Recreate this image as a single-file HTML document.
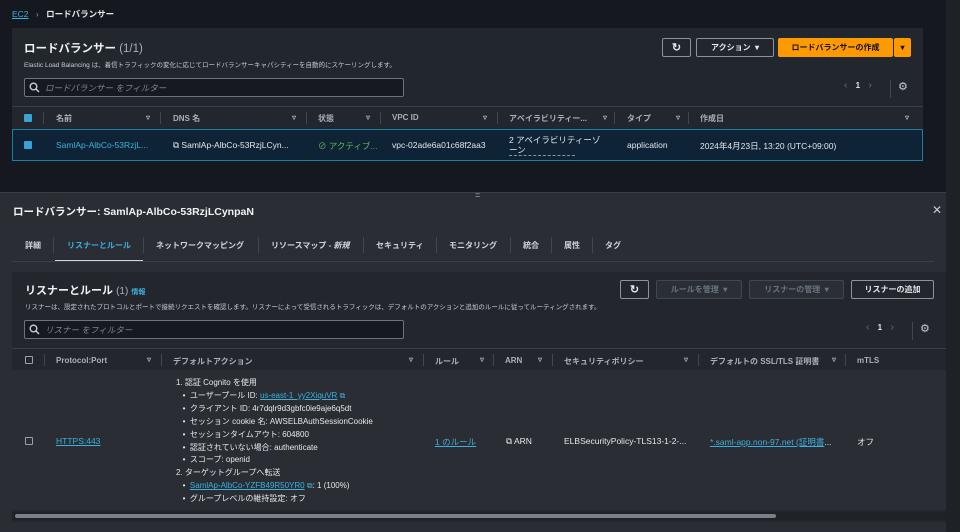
<!DOCTYPE html>
<html><head><meta charset="utf-8"><style>
*{box-sizing:border-box;margin:0;padding:0}
body{width:960px;height:532px;overflow:hidden;background:#15181e;font-family:"Liberation Sans","Noto Sans CJK JP",sans-serif;color:#d1d5db;font-size:8.5px;position:relative}
.abs{position:absolute;white-space:nowrap}
.strip{position:absolute;left:946px;top:0;width:14px;height:532px;background:#1e2126}
.card{position:absolute;left:12px;top:28px;width:911px;height:133px;background:#22262d}
.btn{position:absolute;border:1px solid #8b939c;border-radius:2px;background:#22262d;color:#e5e7eb;font-weight:bold;font-size:8px;display:flex;align-items:center;justify-content:center}
.dis{border-color:#414750;color:#6b7280;background:#2a2e35}
.search{position:absolute;border:1px solid #6b7280;border-radius:2px;background:#161a20;color:#7d848f;font-style:italic;font-size:8.5px;padding-left:20px;display:flex;align-items:center}
.th{position:absolute;font-weight:bold;color:#aab0b8;font-size:8px}
.cb{position:absolute;width:8px;height:8px;border-radius:1px}
.on{background:#3aa3d6}
.off{border:1px solid #9aa1aa}
a{color:#3cb0dc;text-decoration:underline}
.sep{position:absolute;width:1px;height:12px;background:#414750}
.panel{position:absolute;left:0;top:192px;width:946px;height:340px;background:#2a2d33;border-top:1px solid #3a3e45}
.inner{position:absolute;left:12px;top:272px;width:934px;height:250px;background:#23272d}
.row2{position:absolute;left:12px;top:370px;width:934px;height:140px;background:#2a2e34}
</style></head><body>
<div class="strip"></div>
<div class="abs" style="left:12px;top:8px;font-size:8.5px"><span style="color:#3cb0dc;text-decoration:underline">EC2</span> <span style="color:#8b939c;margin:0 5px">›</span> <b style="color:#e5e7eb">ロードバランサー</b></div>
<div class="card"></div>
<div class="abs" style="left:24px;top:40px;font-size:11.5px;font-weight:bold;color:#f0f2f4">ロードバランサー <span style="font-weight:normal;color:#aab0b8">(1/1)</span></div>
<div class="abs" style="left:24px;top:59px;font-size:6.5px;color:#c8ccd2">Elastic Load Balancing は、着信トラフィックの変化に応じてロードバランサーキャパシティーを自動的にスケーリングします。</div>
<div class="btn" style="left:662px;top:38px;width:29px;height:19px;font-size:11px">↻</div>
<div class="btn" style="left:696px;top:38px;width:78px;height:19px">アクション&nbsp;&nbsp;▾</div>
<div class="btn" style="left:778px;top:38px;width:115px;height:19px;background:#ff9900;border-color:#ff9900;color:#111">ロードバランサーの作成</div>
<div class="btn" style="left:894px;top:38px;width:17px;height:19px;background:#ff9900;border-color:#ff9900;color:#111">▾</div>
<div class="search" style="left:24px;top:78px;width:380px;height:19px">ロードバランサー をフィルター</div>
<svg class="abs" style="left:29px;top:82px" width="11" height="11" viewBox="0 0 11 11"><circle cx="4.5" cy="4.5" r="3.3" fill="none" stroke="#c8ccd2" stroke-width="1.4"/><path d="M7 7L10 10" stroke="#c8ccd2" stroke-width="1.5"/></svg>
<div class="abs" style="left:844px;top:80px;font-size:10px;color:#6b7280">‹ &nbsp; <b style="color:#e5e7eb;font-size:8px">1</b> &nbsp; ›</div>
<div class="sep" style="left:890px;top:80px;height:18px"></div>
<div class="abs" style="left:898px;top:80px;font-size:11px;color:#c8ccd2">⚙</div>
<div style="position:absolute;left:12px;top:106px;width:911px;height:1px;background:#3a3e45"></div>
<div class="cb on" style="left:24px;top:114px"></div>
<div class="sep" style="left:43px;top:112px"></div>
<div class="th" style="left:56px;top:113px">名前</div><div class="th" style="left:146px;top:113px">▿</div>
<div class="sep" style="left:160px;top:112px"></div>
<div class="th" style="left:173px;top:113px">DNS 名</div><div class="th" style="left:292px;top:113px">▿</div>
<div class="sep" style="left:306px;top:112px"></div>
<div class="th" style="left:318px;top:113px">状態</div><div class="th" style="left:366px;top:113px">▿</div>
<div class="sep" style="left:380px;top:112px"></div>
<div class="th" style="left:392px;top:113px">VPC ID</div><div class="th" style="left:483px;top:113px">▿</div>
<div class="sep" style="left:497px;top:112px"></div>
<div class="th" style="left:509px;top:113px">アベイラビリティー...</div><div class="th" style="left:603px;top:113px">▿</div>
<div class="sep" style="left:614px;top:112px"></div>
<div class="th" style="left:627px;top:113px">タイプ</div><div class="th" style="left:676px;top:113px">▿</div>
<div class="sep" style="left:688px;top:112px"></div>
<div class="th" style="left:700px;top:113px">作成日</div><div class="th" style="left:905px;top:113px">▿</div>
<div style="position:absolute;left:12px;top:129px;width:911px;height:32px;background:#0e2436;border:1px solid #1b7fa3"></div>
<div class="cb on" style="left:24px;top:141px"></div>
<div class="abs" style="left:56px;top:140px;color:#3cb0dc">SamlAp-AlbCo-53RzjL...</div>
<div class="abs" style="left:173px;top:140px;color:#e5e7eb">⧉ SamlAp-AlbCo-53RzjLCyn...</div>
<div class="abs" style="left:318px;top:140px;color:#5fb85a">⊘ アクティブ...</div>
<div class="abs" style="left:392px;top:140px;color:#e5e7eb">vpc-02ade6a01c68f2aa3</div>
<div class="abs" style="left:509px;top:135px;color:#e5e7eb;line-height:10px">2 アベイラビリティーゾ<br><span style="border-bottom:1px dashed #8b939c">ーン&nbsp;&nbsp;&nbsp;&nbsp;&nbsp;&nbsp;&nbsp;&nbsp;&nbsp;&nbsp;&nbsp;&nbsp;&nbsp;&nbsp;&nbsp;&nbsp;&nbsp;&nbsp;&nbsp;&nbsp;&nbsp;</span></div>
<div class="abs" style="left:627px;top:140px;color:#e5e7eb">application</div>
<div class="abs" style="left:700px;top:140px;color:#e5e7eb">2024年4月23日, 13:20 (UTC+09:00)</div>

<div class="panel"></div>
<div class="abs" style="left:475px;top:190px;color:#aab0b8;font-size:9px">=</div>
<div class="abs" style="left:13px;top:204px;font-size:10.5px;font-weight:bold;color:#f0f2f4">ロードバランサー: SamlAp-AlbCo-53RzjLCynpaN</div>
<div class="abs" style="left:932px;top:203px;font-size:12px;color:#c8ccd2">✕</div>
<div class="abs" style="left:25px;top:240px;font-size:8px;font-weight:bold;color:#d1d5db">詳細</div>
<div class="sep" style="left:53px;top:237px;height:16px"></div>
<div class="abs" style="left:67px;top:240px;font-size:8px;font-weight:bold;color:#3cb0dc">リスナーとルール</div>
<div style="position:absolute;left:55px;top:260px;width:88px;height:2px;background:#d1d5db"></div>
<div class="sep" style="left:143px;top:237px;height:16px"></div>
<div class="abs" style="left:156px;top:240px;font-size:8px;font-weight:bold">ネットワークマッピング</div>
<div class="sep" style="left:258px;top:237px;height:16px"></div>
<div class="abs" style="left:271px;top:240px;font-size:8px;font-weight:bold">リソースマップ - <i>新規</i></div>
<div class="sep" style="left:363px;top:237px;height:16px"></div>
<div class="abs" style="left:376px;top:240px;font-size:8px;font-weight:bold">セキュリティ</div>
<div class="sep" style="left:436px;top:237px;height:16px"></div>
<div class="abs" style="left:449px;top:240px;font-size:8px;font-weight:bold">モニタリング</div>
<div class="sep" style="left:510px;top:237px;height:16px"></div>
<div class="abs" style="left:523px;top:240px;font-size:8px;font-weight:bold">統合</div>
<div class="sep" style="left:551px;top:237px;height:16px"></div>
<div class="abs" style="left:564px;top:240px;font-size:8px;font-weight:bold">属性</div>
<div class="sep" style="left:592px;top:237px;height:16px"></div>
<div class="abs" style="left:605px;top:240px;font-size:8px;font-weight:bold">タグ</div>
<div style="position:absolute;left:12px;top:261px;width:922px;height:1px;background:#3a3e45"></div>

<div class="inner"></div>
<div class="abs" style="left:25px;top:282px;font-size:11px;font-weight:bold;color:#f0f2f4">リスナーとルール <span style="font-weight:normal;color:#aab0b8;font-size:10px">(1)</span> <span style="color:#3cb0dc;font-size:7px">情報</span></div>
<div class="abs" style="left:25px;top:301px;font-size:6.5px;color:#c8ccd2">リスナーは、設定されたプロトコルとポートで接続リクエストを確認します。リスナーによって受信されるトラフィックは、デフォルトのアクションと追加のルールに従ってルーティングされます。</div>
<div class="btn" style="left:620px;top:280px;width:29px;height:19px;font-size:11px">↻</div>
<div class="btn dis" style="left:656px;top:280px;width:86px;height:19px">ルールを管理&nbsp;&nbsp;▾</div>
<div class="btn dis" style="left:749px;top:280px;width:95px;height:19px">リスナーの管理&nbsp;&nbsp;▾</div>
<div class="btn" style="left:851px;top:280px;width:83px;height:19px">リスナーの追加</div>
<div class="search" style="left:24px;top:320px;width:380px;height:19px">リスナー をフィルター</div>
<svg class="abs" style="left:29px;top:324px" width="11" height="11" viewBox="0 0 11 11"><circle cx="4.5" cy="4.5" r="3.3" fill="none" stroke="#c8ccd2" stroke-width="1.4"/><path d="M7 7L10 10" stroke="#c8ccd2" stroke-width="1.5"/></svg>
<div class="abs" style="left:866px;top:322px;font-size:10px;color:#6b7280">‹ &nbsp; <b style="color:#e5e7eb;font-size:8px">1</b> &nbsp; ›</div>
<div class="sep" style="left:912px;top:322px;height:18px"></div>
<div class="abs" style="left:920px;top:322px;font-size:11px;color:#c8ccd2">⚙</div>
<div style="position:absolute;left:12px;top:348px;width:934px;height:1px;background:#3a3e45"></div>
<div class="cb off" style="left:25px;top:356px"></div>
<div class="sep" style="left:44px;top:354px"></div>
<div class="th" style="left:56px;top:356px">Protocol:Port</div><div class="th" style="left:147px;top:355px">▿</div>
<div class="sep" style="left:161px;top:354px"></div>
<div class="th" style="left:173px;top:356px">デフォルトアクション</div><div class="th" style="left:409px;top:355px">▿</div>
<div class="sep" style="left:423px;top:354px"></div>
<div class="th" style="left:435px;top:356px">ルール</div><div class="th" style="left:480px;top:355px">▿</div>
<div class="sep" style="left:493px;top:354px"></div>
<div class="th" style="left:505px;top:356px">ARN</div><div class="th" style="left:538px;top:355px">▿</div>
<div class="sep" style="left:552px;top:354px"></div>
<div class="th" style="left:564px;top:356px">セキュリティポリシー</div><div class="th" style="left:684px;top:355px">▿</div>
<div class="sep" style="left:698px;top:354px"></div>
<div class="th" style="left:710px;top:356px">デフォルトの SSL/TLS 証明書</div><div class="th" style="left:832px;top:355px">▿</div>
<div class="sep" style="left:845px;top:354px"></div>
<div class="th" style="left:857px;top:356px">mTLS</div>
<div class="row2"></div>
<div class="cb off" style="left:25px;top:437px"></div>
<div class="abs" style="left:56px;top:436px"><a>HTTPS:443</a></div>
<div class="abs" style="left:176px;top:377px;font-size:8px;line-height:12.9px;color:#e5e7eb">1. 認証 Cognito を使用<br>
&nbsp;&nbsp;&nbsp;•&nbsp; ユーザープール ID: <a>us-east-1_yy2XiquVR</a> <span style="color:#3cb0dc">⧉</span><br>
&nbsp;&nbsp;&nbsp;•&nbsp; クライアント ID: 4r7dqlr9d3gbfc0ie9aje6q5dt<br>
&nbsp;&nbsp;&nbsp;•&nbsp; セッション cookie 名: AWSELBAuthSessionCookie<br>
&nbsp;&nbsp;&nbsp;•&nbsp; セッションタイムアウト: 604800<br>
&nbsp;&nbsp;&nbsp;•&nbsp; 認証されていない場合: authenticate<br>
&nbsp;&nbsp;&nbsp;•&nbsp; スコープ: openid<br>
2. ターゲットグループへ転送<br>
&nbsp;&nbsp;&nbsp;•&nbsp; <a>SamlAp-AlbCo-YZFB49R50YR0</a> <span style="color:#3cb0dc">⧉</span>: 1 (100%)<br>
&nbsp;&nbsp;&nbsp;•&nbsp; グループレベルの維持設定: オフ</div>
<div class="abs" style="left:435px;top:436px"><a>1 のルール</a></div>
<div class="abs" style="left:506px;top:436px;color:#e5e7eb">⧉ ARN</div>
<div class="abs" style="left:564px;top:436px;color:#e5e7eb">ELBSecurityPolicy-TLS13-1-2-...</div>
<div class="abs" style="left:710px;top:436px"><a>*.saml-app.non-97.net (証明書</a><span style="color:#e5e7eb">...</span></div>
<div class="abs" style="left:857px;top:436px;color:#e5e7eb">オフ</div>
<div style="position:absolute;left:12px;top:512px;width:934px;height:8px;background:#1f2227"></div>
<div style="position:absolute;left:15px;top:514px;width:761px;height:4px;background:#7b8088;border-radius:2px"></div>
</body></html>
